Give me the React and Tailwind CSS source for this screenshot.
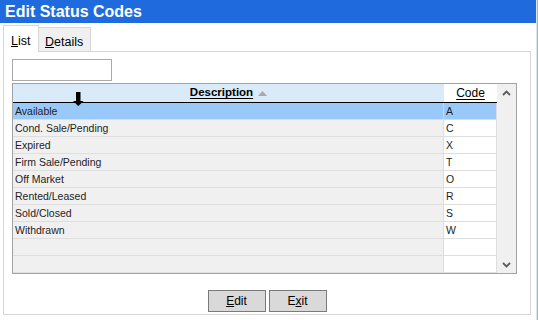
import React from "react";

const statuses = [
  { description: "Available", code: "A" },
  { description: "Cond. Sale/Pending", code: "C" },
  { description: "Expired", code: "X" },
  { description: "Firm Sale/Pending", code: "T" },
  { description: "Off Market", code: "O" },
  { description: "Rented/Leased", code: "R" },
  { description: "Sold/Closed", code: "S" },
  { description: "Withdrawn", code: "W" },
  { description: "", code: "" },
  { description: "", code: "" },
];

const Chevron = ({ up }) => (
  <svg width="9" height="6" viewBox="0 0 9 6">
    <path
      d={up ? "M1 5 L4.5 1.5 L8 5" : "M1 1 L4.5 4.5 L8 1"}
      fill="none"
      stroke="#5a5a5a"
      strokeWidth="1.8"
    />
  </svg>
);

const GridRow = ({ row, selected }) => (
  <div className="flex h-[17px] border-b border-[#dedede] text-[10.5px] leading-[16px] text-[#1e1e1e]">
    <div
      className={`w-[431px] border-r pl-[2px] ${
        selected ? "bg-[#99c9f8] border-[#c4dcf4]" : "bg-[#f0f0f0] border-[#dedede]"
      }`}
    >
      {row.description}
    </div>
    <div
      className={`w-[53px] border-r border-[#dedede] pl-[2px] ${
        selected ? "bg-[#99c9f8]" : "bg-white"
      }`}
    >
      {row.code}
    </div>
  </div>
);

const StatusGrid = () => (
  <div className="relative mt-[2px] flex h-[191px] w-[505px] border border-[#a3a3a3] bg-white">
    <div className="flex w-[484px] flex-col">
      <div className="flex h-[18px] text-black">
        <div className="flex w-[431px] items-center justify-center gap-[5px] bg-[#d9eaf8] text-[11.5px] font-bold">
          <span className="underline underline-offset-[2px]">Description</span>
          <svg width="9" height="6" viewBox="0 0 9 6">
            <path d="M0 6 L4.5 1 L9 6 Z" fill="#a9a9a9" />
          </svg>
        </div>
        <div className="flex w-[53px] items-center justify-center bg-white text-[12px]">
          <span className="underline underline-offset-[2px]">Code</span>
        </div>
      </div>
      <div className="h-[1px] bg-black" />
      {statuses.map((row, i) => (
        <GridRow key={i} row={row} selected={i === 0} />
      ))}
    </div>
    <div className="flex w-[19px] flex-col justify-between bg-[#f0f0f0]">
      <div className="flex h-[18px] items-center justify-center">
        <Chevron up />
      </div>
      <div className="flex h-[17px] items-center justify-center">
        <Chevron />
      </div>
    </div>
    {/* column drag indicator */}
    <svg className="absolute left-[60px] top-[8px]" width="11" height="15" viewBox="0 0 11 15">
      <rect x="3" y="0" width="4.5" height="9" fill="#000" />
      <path d="M0 9 L10.5 9 L5.25 14 Z" fill="#000" />
    </svg>
  </div>
);

const Button = ({ children }) => (
  <button
    type="button"
    className="h-[22px] w-[58px] border border-[#7a7a7a] bg-[#d9d9d9] text-[12px] text-black"
  >
    {children}
  </button>
);

export default function App() {
  return (
    <div
      className="flex h-[320px] w-[538px] bg-white"
      style={{ fontFamily: '"Liberation Sans", Arial, sans-serif' }}
    >
      <div className="flex w-[536px] flex-col">
        <div className="flex h-[23px] items-center bg-[#1f6bdd] pl-[5px] text-[16px] font-bold text-white">
          Edit Status Codes
        </div>
        <div className="flex flex-col pl-[3px]">
          <div className="mt-[2px] flex h-[26px] items-end">
            <div className="relative z-10 -mb-[1px] flex h-[27px] w-[36px] items-start border border-b-0 border-[#d6d6d6] bg-white pl-[7px] pt-[6px] text-[12.5px] text-black">
              <span>
                <span className="underline">L</span>ist
              </span>
            </div>
            <div className="flex h-[24px] w-[52px] items-start border border-b-0 border-l-0 border-[#d6d6d6] bg-[#f0f0f0] pl-[6px] pt-[5px] text-[12.5px] text-black">
              <span>
                <span className="underline">D</span>etails
              </span>
            </div>
          </div>
          <div className="flex h-[264px] w-[528px] flex-col border border-[#d6d6d6] bg-white pl-[8px] pt-[7px]">
            <input
              type="text"
              className="h-[22px] w-[100px] border border-[#a9a9a9] bg-white outline-none"
            />
            <StatusGrid />
            <div className="mt-[16px] flex justify-center gap-[3px] pr-[8px]">
              <Button>
                <span className="underline">E</span>dit
              </Button>
              <Button>
                E<span className="underline">x</span>it
              </Button>
            </div>
          </div>
        </div>
      </div>
      <div className="w-[1px] bg-[#e4e4e4]" />
      <div className="w-[1px] bg-[#7cc3ef]" />
    </div>
  );
}
